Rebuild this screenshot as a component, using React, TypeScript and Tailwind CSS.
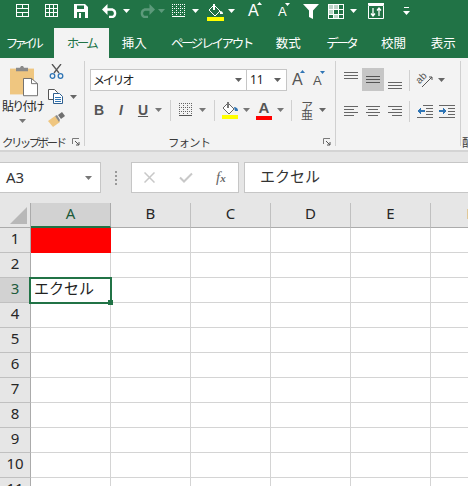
const jp = "font-['Noto_Sans_CJK_JP','Noto_Sans',sans-serif]";

const Caret = ({ color = '#5f5f5f', className = '' }: { color?: string; className?: string }) => (
  <svg width="7" height="4" viewBox="0 0 7 4" className={`shrink-0 ${className}`}>
    <path d="M0 0h7L3.5 4z" fill={color} />
  </svg>
);

const Launcher = () => (
  <svg width="8" height="8" viewBox="0 0 8 8" className="shrink-0">
    <path d="M.5 6V.5H7" fill="none" stroke="#7a7a7a" />
    <path d="M3 3l4 4M7 4v3H4" fill="none" stroke="#555" />
  </svg>
);

const Sep = ({ h }: { h: string }) => <div className={`w-px shrink-0 bg-[#d0d0d0] ${h}`} />;

// quick access toolbar
const TableIcon = ({ variant }: { variant: number }) => (
  <svg width="14" height="14" viewBox="0 0 14 14" fill="none" stroke="#fff" shapeRendering="crispEdges" className="shrink-0">
    <rect x=".5" y=".5" width="12" height="12" />
    {variant === 1 ? (
      <path d="M1 4.5h12M1 8.5h12M6.5 1v3M6.5 9v4" />
    ) : (
      <path d="M1 4.5h12M1 8.5h12M4.5 1v12M8.5 1v12" />
    )}
  </svg>
);

const QuickBar = () => (
  <div className="flex h-[28px] items-center pb-[6px] pl-[16px]">
    <TableIcon variant={1} />
    <div className="ml-[15px]">
      <TableIcon variant={2} />
    </div>
    <svg width="14" height="14" viewBox="0 0 14 14" className="ml-[15px] shrink-0">
      <path d="M0 0h11l3 3v11H0z" fill="#fff" />
      <path d="M3 1.5h7v3.5H3z" fill="#217346" />
      <path d="M3 8h8v6H3z" fill="#217346" />
      <path d="M5 9h2v5H5z" fill="#fff" />
    </svg>
    <svg width="17" height="14" viewBox="0 0 17 14" className="ml-[14px] shrink-0">
      <path d="M2 5.5h8.5a4 4 0 0 1 0 7.5H7" fill="none" stroke="#fff" strokeWidth="2.4" />
      <path d="M0 5.5L5.5 0v11z" fill="#fff" />
    </svg>
    <Caret color="#fff" className="ml-[4px]" />
    <svg width="17" height="14" viewBox="0 0 17 14" className="ml-[8px] shrink-0">
      <path d="M15 5.5H6.5a4 4 0 0 0 0 7.5H10" fill="none" stroke="#5d9a7b" strokeWidth="2.4" />
      <path d="M17 5.5L11.5 0v11z" fill="#5d9a7b" />
    </svg>
    <Caret color="#5d9a7b" className="ml-[3px]" />
    <svg width="14" height="14" viewBox="0 0 14 14" className="ml-[7px] shrink-0" shapeRendering="crispEdges">
      <path d="M.5 0v13M4.5 0v13M8.5 0v13M12.5 0v13M0 .5h13M0 4.5h13M0 8.5h13" stroke="#fff" strokeDasharray="1 1" fill="none" />
      <path d="M0 12.5h13" stroke="#fff" />
    </svg>
    <Caret color="#fff" className="ml-[6px]" />
    <svg width="17" height="18" viewBox="0 0 17 18" className="ml-[8px] mt-[1px] shrink-0">
      <path d="M7 2l6 6-5 5-6-6z" fill="none" stroke="#fff" />
      <path d="M6 1h2v6H6z" fill="#fff" />
      <path d="M13 8c2 0 3 1 3 3h-3z" fill="#fff" />
      <path d="M0 14h17v4H0z" fill="#ffff00" />
    </svg>
    <Caret color="#fff" className="ml-[4px]" />
    <div className="relative ml-[13px] w-[14px] text-[16px] leading-[16px] text-white font-['Liberation_Sans',sans-serif]">
      A
      <svg width="5" height="3" viewBox="0 0 5 3" className="absolute left-[9px] top-[-1px]">
        <path d="M2.5 0L5 3H0z" fill="#fff" />
      </svg>
    </div>
    <div className="relative ml-[16px] w-[10px] text-[13px] leading-[13px] text-white font-['Liberation_Sans',sans-serif]">
      A
      <svg width="5" height="3" viewBox="0 0 5 3" className="absolute left-[7px] top-[-2px]">
        <path d="M0 0h5L2.5 3z" fill="#fff" />
      </svg>
    </div>
    <svg width="16" height="15" viewBox="0 0 16 15" className="ml-[15px] shrink-0">
      <path d="M0 0h16l-6 6.5V15l-4-2V6.500z" fill="#fff" />
    </svg>
    <svg width="16" height="15" viewBox="0 0 16 15" className="ml-[9px] shrink-0" shapeRendering="crispEdges">
      <path d="M.5 0v15M5.500 0v15M10.500 0v15M15.500 0v15M0 .5h16M0 5.500h16M0 10.500h16M0 14.500h16" stroke="#fff" fill="none" />
      <path d="M1 1h9v4H1zM1 6h4v4H1zM6 11h4v3H6z" fill="#fff" fillOpacity=".7" />
    </svg>
    <Caret color="#fff" className="ml-[6px]" />
    <svg width="16" height="16" viewBox="0 0 16 16" className="ml-[11px] shrink-0">
      <path d="M.5 2.500h15v13H.5z" fill="none" stroke="#fff" />
      <path d="M0 0h16v2H0z" fill="#fff" />
      <path d="M5 5v8M3 10.500l2 2.500 2-2.500M11 13V5M9 7.500L11 5l2 2.500" fill="none" stroke="#fff" strokeWidth="1.300" />
    </svg>
    <div className="ml-[19px] flex flex-col items-center gap-[3px]">
      <div className="h-px w-[5px] bg-white" />
      <Caret color="#fff" />
    </div>
  </div>
);

const TabBar = () => (
  <div className={`flex h-[30px] items-stretch text-[12.5px] text-white ${jp}`}>
    <div className="flex w-[46px] items-center justify-center tracking-[-4px]">ファイル</div>
    <div className="ml-[9px] flex w-[55px] items-center justify-center bg-[#f3f3f3] tracking-[-2.5px] text-[#217346]">ホーム</div>
    <div className="flex w-[52px] items-center justify-center">挿入</div>
    <div className="flex w-[104px] items-center justify-center tracking-[-2.4px]">ページ レイアウト</div>
    <div className="flex w-[52px] items-center justify-center">数式</div>
    <div className="flex w-[55px] items-center justify-center tracking-[-2.5px]">データ</div>
    <div className="flex w-[51px] items-center justify-center">校閲</div>
    <div className="flex w-[50px] items-center justify-center">表示</div>
  </div>
);

// ribbon groups
const ClipboardGroup = () => (
  <div className="flex w-[84px] shrink-0 flex-col">
    <div className="flex h-[74px]">
      <div className="flex w-[45px] flex-col items-center">
        <svg width="28" height="31" viewBox="0 0 28 36" preserveAspectRatio="none" className="mt-[5px] ml-[2px] shrink-0">
          <path d="M0 3h24v30H0z" fill="#efc680" />
          <path d="M6 2h4l1-2h2l1 2h4v4H6z" fill="#8a8a8a" />
          <path d="M13.500 14.500h8l6 6v14h-14z" fill="#fff" stroke="#6a6a6a" />
          <path d="M21.500 14.500v6h6" fill="none" stroke="#6a6a6a" />
        </svg>
        <div className={`mt-[2px] text-[12px] leading-[14px] tracking-[-1.8px] whitespace-nowrap text-[#262626] ${jp}`}>貼り付け</div>
        <Caret color="#777" className="mt-[6px]" />
      </div>
      <div className="ml-[3px] flex flex-col">
        <svg width="15" height="15" viewBox="0 0 15 15" className="mt-[3px] ml-[1px] shrink-0">
          <path d="M3 0l7 9M12 0L5 9" stroke="#555" strokeWidth="1.300" fill="none" />
          <circle cx="3.500" cy="12" r="2.300" fill="none" stroke="#2f75b5" strokeWidth="1.300" />
          <circle cx="11.500" cy="12" r="2.300" fill="none" stroke="#2f75b5" strokeWidth="1.300" />
        </svg>
        <div className="mt-[10px] flex items-center">
          <svg width="15" height="15" viewBox="0 0 15 15" className="shrink-0">
            <path d="M.5.500h6l3 3v7h-9z" fill="#fff" stroke="#555" />
            <path d="M5.500 4.500h6l3 3v7h-9z" fill="#fff" stroke="#2f5f8f" />
            <path d="M7 8.500h6M7 10.500h6M7 12.500h6" stroke="#2f75b5" />
          </svg>
          <Caret color="#666" className="ml-[7px]" />
        </div>
        <svg width="17" height="16" viewBox="0 0 17 16" className="mt-[8px] shrink-0">
          <path d="M0 9l7-5 5 6-7 5z" fill="#efc680" />
          <path d="M7 4l2-1 3 5-1 2z" fill="#8a8a8a" />
          <path d="M10 3l4-3 3 4-4 3z" fill="#6f6f6f" />
        </svg>
      </div>
    </div>
    <div className="flex h-[14px] items-center pl-[2px] pr-[4px]">
      <div className={`flex-1 text-[11.5px] leading-[14px] tracking-[-2.6px] whitespace-nowrap text-[#3a3a3a] ${jp}`}>クリップボード</div>
      <Launcher />
    </div>
  </div>
);

const BIcon = ({ letter, cls }: { letter: string; cls: string }) => (
  <span className={`w-[22px] text-center text-[14px] leading-[16px] text-[#555] font-['Liberation_Sans',sans-serif] ${cls}`}>{letter}</span>
);

const FontGroup = () => (
  <div className="ml-[1px] flex w-[249px] shrink-0 flex-col pl-[4px]">
    <div className="mt-[8px] flex h-[22px] items-center">
      <div className="flex h-[22px] w-[157px] items-center border border-[#c6c6c6] bg-white pl-[2px] pr-[4px]">
        <span className={`flex-1 text-[12px] tracking-[-2.2px] text-[#222] ${jp}`}>メイリオ</span>
        <Caret />
      </div>
      <div className="flex h-[22px] w-[40px] items-center border border-l-0 border-[#c6c6c6] bg-white pl-[3px] pr-[5px]">
        <span className="flex-1 text-[12px] text-[#222] font-['Noto_Sans',sans-serif]">11</span>
        <Caret />
      </div>
      <div className="relative ml-[5px] w-[12px] text-[16px] leading-[16px] text-[#555] font-['Liberation_Sans',sans-serif]">
        A
        <svg width="5" height="3" viewBox="0 0 5 3" className="absolute left-[8px] top-[-2px]">
          <path d="M2.500 0L5 3H0z" fill="#2f75b5" />
        </svg>
      </div>
      <div className="relative ml-[9px] w-[10px] text-[13px] leading-[13px] text-[#555] font-['Liberation_Sans',sans-serif]">
        A
        <svg width="5" height="3" viewBox="0 0 5 3" className="absolute left-[7px] top-[-3px]">
          <path d="M0 0h5L2.500 3z" fill="#2f75b5" />
        </svg>
      </div>
    </div>
    <div className="mt-[8px] -ml-[2px] flex h-[22px] items-center">
      <BIcon letter="B" cls="font-bold" />
      <BIcon letter="I" cls="font-bold italic" />
      <BIcon letter="U" cls="font-bold underline" />
      <Caret color="#777" className="ml-[1px]" />
      <div className="ml-[8px]">
        <Sep h="h-[21px]" />
      </div>
      <svg width="14" height="14" viewBox="0 0 14 14" className="ml-[8px] shrink-0" shapeRendering="crispEdges">
        <path d="M.5 0v12M4.500 0v12M8.500 0v12M12.500 0v12M0 .5h13M0 4.500h13M0 8.500h13" stroke="#666" strokeDasharray="1 1" fill="none" />
        <path d="M0 12.500h13" stroke="#555" />
      </svg>
      <Caret color="#777" className="ml-[6px]" />
      <div className="ml-[8px]">
        <Sep h="h-[21px]" />
      </div>
      <svg width="16" height="18" viewBox="0 0 16 18" className="ml-[7px] shrink-0">
        <path d="M6 2l6 6-5 5-6-6z" fill="#fff" stroke="#666" />
        <path d="M5 1h2v6H5z" fill="#777" />
        <path d="M12 6c2 0 4 1 4 4h-3z" fill="#2f75b5" />
        <path d="M0 14h16v4H0z" fill="#ffff00" />
      </svg>
      <Caret color="#777" className="ml-[5px]" />
      <div className="ml-[6px] flex w-[16px] shrink-0 flex-col items-center">
        <span className="text-[15px] leading-[14px] font-bold text-[#555] font-['Liberation_Sans',sans-serif]">A</span>
        <div className="mt-[1px] h-[4px] w-[16px] bg-[#ff0000]" />
      </div>
      <Caret color="#777" className="ml-[5px]" />
      <div className="ml-[7px]">
        <Sep h="h-[21px]" />
      </div>
      <span className={`ml-[9px] w-[10px] text-[12px] leading-[9px] text-[#555] ${jp}`}>ア亜</span>
      <Caret color="#666" className="ml-[8px]" />
    </div>
    <div className="mt-[14px] flex h-[14px] items-center">
      <div className={`w-[196px] pl-[2px] text-center text-[11.5px] leading-[14px] tracking-[-1px] text-[#3a3a3a] ${jp}`}>フォント</div>
      <div className="ml-[37px]">
        <Launcher />
      </div>
    </div>
  </div>
);

const Lines = ({ kind }: { kind: string }) => {
  const d = {
    left: 'M0 .5h14M0 3.500h10M0 6.500h14M0 9.500h10',
    center: 'M0 .5h14M2 3.500h10M0 6.500h14M2 9.500h10',
    right: 'M0 .5h14M4 3.500h10M0 6.500h14M4 9.500h10'
  }[kind];
  return (
    <svg width="14" height="10" viewBox="0 0 14 10" className="shrink-0" shapeRendering="crispEdges">
      <path d={d} stroke="#666" fill="none" />
    </svg>
  );
};

const AlignGroup = () => (
  <div className="flex shrink-0 flex-col pl-[8px]">
    <div className="mt-[7px] flex h-[24px] items-stretch">
      <div className="pt-[4px]">
        <svg width="14" height="7" viewBox="0 0 14 7" className="shrink-0" shapeRendering="crispEdges">
          <path d="M0 .5h14M0 3.500h14M0 6.500h14" stroke="#666" fill="none" />
        </svg>
      </div>
      <div className="ml-[4px] flex h-[23px] w-[22px] items-center justify-center bg-[#c6c6c6]">
        <svg width="14" height="7" viewBox="0 0 14 7" shapeRendering="crispEdges">
          <path d="M0 .5h14M0 3.500h14M0 6.500h14" stroke="#555" fill="none" />
        </svg>
      </div>
      <div className="ml-[4px] pt-[14px]">
        <svg width="14" height="7" viewBox="0 0 14 7" className="shrink-0" shapeRendering="crispEdges">
          <path d="M0 .5h14M0 3.500h14M0 6.500h14" stroke="#666" fill="none" />
        </svg>
      </div>
      <div className="ml-[7px] self-center">
        <Sep h="h-[21px]" />
      </div>
      <svg width="16" height="16" viewBox="0 0 16 16" className="ml-[7px] shrink-0 self-center overflow-visible">
        <text x="0" y="10" transform="rotate(-45 4 8)" fontSize="10" fill="#555" fontFamily="Liberation Sans">ab</text>
        <path d="M5 15l10-10M15 5v3M15 5h-3" stroke="#555" fill="none" />
      </svg>
      <Caret color="#666" className="ml-[5px] self-center" />
    </div>
    <div className="mt-[8px] flex h-[22px] items-center">
      <Lines kind="left" />
      <div className="ml-[8px]">
        <Lines kind="center" />
      </div>
      <div className="ml-[8px]">
        <Lines kind="right" />
      </div>
      <div className="ml-[7px]">
        <Sep h="h-[21px]" />
      </div>
      <svg width="16" height="13" viewBox="0 0 16 13" className="ml-[7px] shrink-0" shapeRendering="crispEdges">
        <path d="M6 .5h10M9 3.500h7M9 6.500h7M9 9.500h7M0 12.500h16" stroke="#666" fill="none" />
        <path d="M0 6l4-3v2h4v2H4v2z" fill="#2f75b5" />
      </svg>
      <svg width="16" height="13" viewBox="0 0 16 13" className="ml-[6px] shrink-0" shapeRendering="crispEdges">
        <path d="M0 .5h16M9 3.500h7M9 6.500h7M9 9.500h7M0 12.500h16" stroke="#666" fill="none" />
        <path d="M8 6L4 3v2H0v2h4v2z" fill="#2f75b5" />
      </svg>
    </div>
  </div>
);

const Ribbon = () => (
  <div className="flex h-[92px] bg-[#f3f3f3] pt-[3px]">
    <ClipboardGroup />
    <Sep h="h-[85px]" />
    <FontGroup />
    <Sep h="h-[85px]" />
    <AlignGroup />
    <div className="ml-[5px]">
      <Sep h="h-[85px]" />
    </div>
    <div className={`flex-1 overflow-hidden whitespace-nowrap pl-[1px] pt-[74px] text-[11.5px] leading-[14px] text-[#3a3a3a] ${jp}`}>配置</div>
  </div>
);

const FormulaBar = () => (
  <div className="flex h-[53px] border-t-2 border-[#d4d4d4] bg-[#e6e6e6] pt-[10px]">
    <div className="flex h-[31px] w-[101px] items-center border border-l-0 border-[#c6c6c6] bg-white pl-[6px] pr-[8px]">
      <span className="flex-1 pb-[1px] text-[15px] text-[#333] font-['Noto_Sans',sans-serif]">A3</span>
      <Caret color="#777" />
    </div>
    <div className="flex h-[31px] w-[30px] flex-col items-center justify-center gap-[2px]">
      <div className="h-[2px] w-[2px] bg-[#999]" />
      <div className="h-[2px] w-[2px] bg-[#999]" />
      <div className="h-[2px] w-[2px] bg-[#999]" />
      <div className="h-[2px] w-[2px] bg-[#999]" />
    </div>
    <div className="flex h-[31px] w-[108px] items-center border border-[#c6c6c6] bg-white">
      <svg width="11" height="11" viewBox="0 0 11 11" className="ml-[12px] shrink-0">
        <path d="M.5.5l10 10M10.500.5l-10 10" stroke="#c8c8c8" strokeWidth="1.500" />
      </svg>
      <svg width="14" height="11" viewBox="0 0 14 11" className="ml-[24px] shrink-0">
        <path d="M1 5.500l4 4 8-8" stroke="#c8c8c8" strokeWidth="2" fill="none" />
      </svg>
      <span className="ml-[23px] text-[15px] leading-none italic text-[#666] font-['Liberation_Serif',serif]">
        f<span className="text-[11px] font-bold">x</span>
      </span>
    </div>
    <div className="ml-[5px] flex h-[31px] flex-1 items-center border border-r-0 border-[#c6c6c6] bg-white pb-[2px] pl-[15px]">
      <span className={`text-[15px] text-[#333] ${jp}`}>エクセル</span>
    </div>
  </div>
);

const cols = ['A', 'B', 'C', 'D', 'E', 'F'];
const rows = [1, 2, 3, 4, 5, 6, 7, 8, 9, 10, 11];

const ColHeader = () => (
  <div className="flex h-[25px] bg-[#e6e6e6]">
    <div className="flex h-[25px] w-[31px] shrink-0 items-end justify-end border-b border-r border-[#ababab] pr-[3px] pb-[3px]">
      <svg width="17" height="17" viewBox="0 0 17 17" className="shrink-0">
        <path d="M17 0v17H0z" fill="#b8b8b8" />
      </svg>
    </div>
    {cols.map((c) => (
      <div
        key={c}
        className={`flex h-[25px] w-[80px] shrink-0 items-center justify-center pb-[3px] text-[15px] font-['Noto_Sans',sans-serif] ${
          c === 'A'
            ? 'border-b-2 border-r border-b-[#217346] border-r-[#ababab] bg-[#d2d2d2] text-[#1d5a3a]'
            : 'border-b border-r border-b-[#ababab] border-r-[#c0c0c0] text-[#262626]'
        }`}>
        {c}
      </div>
    ))}
  </div>
);

const Row = ({ n }: { n: number }) => (
  <div className="flex h-[25px]">
    <div
      className={`flex w-[31px] shrink-0 items-center justify-center border-b border-r border-b-[#c0c0c0] border-r-[#ababab] pb-[3px] text-[15px] font-['Noto_Sans',sans-serif] ${
        n === 3 ? 'bg-[#d2d2d2] text-[#1d5a3a]' : 'bg-[#e6e6e6] text-[#262626]'
      }`}>
      {n}
    </div>
    {cols.map((c) => (
      <div
        key={c}
        className={`relative h-[25px] w-[80px] shrink-0 border-b border-r ${
          n === 1 && c === 'A' ? 'border-[#ff0000] bg-[#ff0000]' : 'border-[#d4d4d4] bg-white'
        }`}>
        {n === 3 && c === 'A' && (
          <>
            <div className="absolute -left-[2px] -top-[1px] bottom-[-2px] right-[-2px] z-10 border-2 border-[#217346]" />
            <div className="absolute bottom-[-3px] right-[-3px] z-10 h-[5px] w-[5px] bg-[#217346]" />
            <span className={`absolute left-[3px] top-[-2px] text-[15px] leading-[24px] whitespace-nowrap text-[#222] ${jp}`}>エクセル</span>
          </>
        )}
      </div>
    ))}
  </div>
);

export default function App() {
  return (
    <div className="h-[486px] w-[468px] overflow-hidden bg-white">
      <div className="bg-[#217346]">
        <QuickBar />
        <TabBar />
      </div>
      <Ribbon />
      <FormulaBar />
      <ColHeader />
      {rows.map((n) => (
        <Row key={n} n={n} />
      ))}
    </div>
  );
}
